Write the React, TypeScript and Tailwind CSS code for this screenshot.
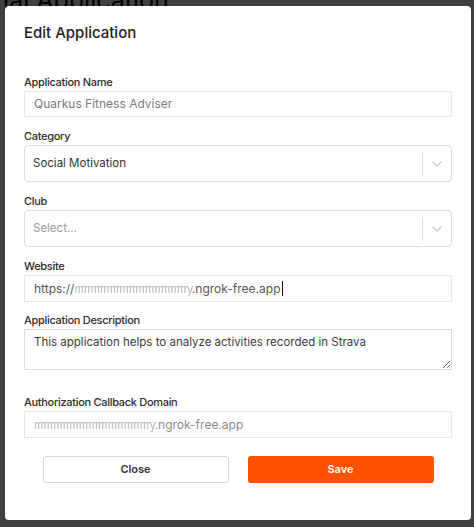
import React from "react";

const font = { fontFamily: "Inter, 'Noto Sans', sans-serif" };

const Chevron = () => (
  <svg width="10" height="6" viewBox="0 0 10 6" fill="none">
    <path d="M1 1l4 4 4-4" stroke="#c8c8c8" strokeWidth="1.3" strokeLinecap="round" strokeLinejoin="round" />
  </svg>
);

const Label: React.FC<{ children: React.ReactNode }> = ({ children }) => (
  <div className="text-[11px] leading-[14px] h-[14px] mb-[2px] font-medium tracking-[-0.3px] text-[#2d2d2d]">
    {children}
  </div>
);

const Blurred: React.FC<{ count: number }> = ({ count }) => (
  <span className="text-[#b9b9b9] blur-[0.7px] tracking-[-1.5px]">{"r".repeat(count) + "y"}</span>
);

const SelectBox: React.FC<{ value?: string; placeholder?: string }> = ({ value, placeholder }) => (
  <div className="h-[37px] border border-[#dcdcdc] rounded-[4px] flex items-center">
    <div className={`flex-1 pl-[8px] text-[11.5px] ${value ? "text-[#333]" : "text-[#9a9a9a]"}`}>
      {value ?? placeholder}
    </div>
    <div className="w-px h-[24px] bg-[#dcdcdc]" />
    <div className="w-[28px] flex items-center justify-center">
      <Chevron />
    </div>
  </div>
);

export default function App() {
  return (
    <div className="relative w-[474px] h-[527px] overflow-hidden bg-white" style={font}>
      {/* page behind the modal */}
      <h1 className="-ml-[62px] -mt-[14px] text-[25px] leading-[28px] text-black whitespace-nowrap">
        Original Application
      </h1>
      <div className="absolute inset-0 bg-black/75" />

      {/* modal */}
      <div className="absolute left-[5px] top-[6px] w-[466px] h-[514px] bg-white rounded-[4px] px-[19px] pt-[17px]">
        <h2 className="text-[15px] leading-[20px] font-medium text-[#222]">Edit Application</h2>

        <div className="mt-[32px]">
          <Label>Application Name</Label>
          <div className="h-[26px] border border-[#e6e6e6] flex items-center px-[9px] text-[12px] text-[#7a7a7a]">
            Quarkus Fitness Adviser
          </div>
        </div>

        <div className="mt-[12px]">
          <Label>Category</Label>
          <SelectBox value="Social Motivation" />
        </div>

        <div className="mt-[12px]">
          <Label>Club</Label>
          <SelectBox placeholder="Select..." />
        </div>

        <div className="mt-[12px]">
          <Label>Website</Label>
          <div className="h-[27px] border border-[#e6e6e6] flex items-center px-[9px] text-[12px] text-[#555] whitespace-nowrap">
            https://
            <Blurred count={35} />
            .ngrok-free.app
            <span className="w-px h-[15px] bg-[#111] ml-[1px]" />
          </div>
        </div>

        <div className="mt-[11px]">
          <Label>Application Description</Label>
          <textarea
            readOnly
            defaultValue="This application helps to analyze activities recorded in Strava"
            className="block w-full h-[41px] border border-[#dcdcdc] px-[9px] pt-[4px] text-[11.5px] leading-[16px] text-[#3a3a3a] outline-none"
          />
        </div>

        <div className="mt-[25px]">
          <Label>Authorization Callback Domain</Label>
          <div className="h-[27px] border border-[#e6e6e6] flex items-center px-[9px] text-[12px] text-[#8a8a8a] whitespace-nowrap">
            <Blurred count={36} />
            .ngrok-free.app
          </div>
        </div>

        <div className="mt-[18px] flex justify-center gap-[19px]">
          <button className="w-[186px] h-[27px] border border-[#d6d6d6] rounded-[3px] bg-white text-[11px] font-semibold text-[#333]">
            Close
          </button>
          <button className="w-[186px] h-[27px] rounded-[3px] bg-[#fc5200] text-[11px] font-semibold text-white">
            Save
          </button>
        </div>
      </div>
    </div>
  );
}
